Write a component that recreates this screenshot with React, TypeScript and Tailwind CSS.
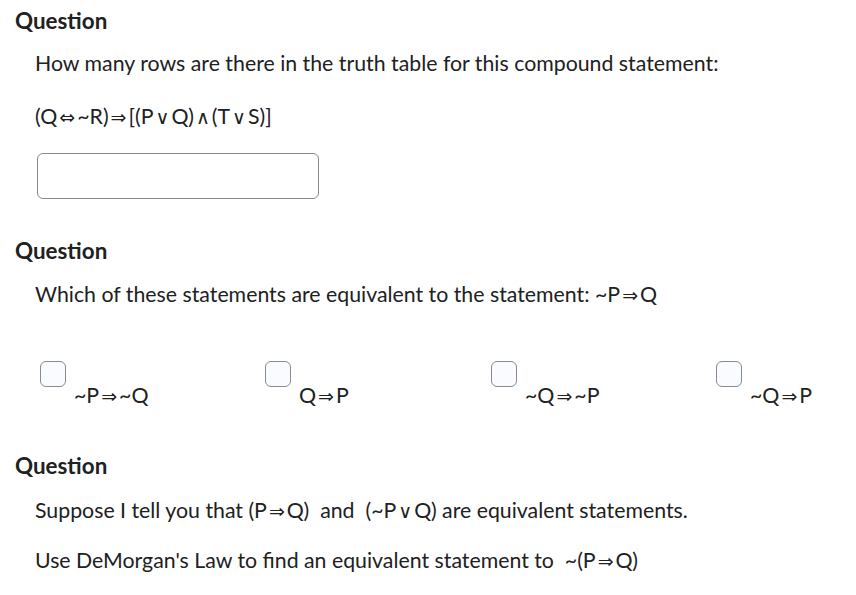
import React from 'react';

const options = ['~P⇒~Q', 'Q⇒P', '~Q⇒~P', '~Q⇒P'];

// logic symbols fall back to a thinner symbol face in the original
const Sym: React.FC<{ children: React.ReactNode }> = ({ children }) => (
  <span className="font-['DejaVu_Sans',sans-serif] text-[19px] mx-[2px]">{children}</span>
);

const Heading: React.FC<{ children: React.ReactNode }> = ({ children }) => (
  <h2 className="pl-[15px] text-[22.4px] font-bold leading-[24px] text-[#202122]">{children}</h2>
);

function withSymbols(s: string) {
  return s.split(/([⇔⇒∨∧])/).map((part, i) =>
    /[⇔⇒∨∧]/.test(part) ? <Sym key={i}>{part}</Sym> : <React.Fragment key={i}>{part}</React.Fragment>
  );
}

export default function App() {
  return (
    <div className="w-[856px] h-[595px] bg-white overflow-hidden text-[#202122] font-['Lato','Liberation_Sans',sans-serif]">
      <div className="pt-[9px]">
        <Heading>Question</Heading>
        <p className="pl-[35px] pt-[18px] text-[21.3px] leading-[24px]">
          How many rows are there in the truth table for this compound statement:
        </p>
        <p className="pl-[35px] pt-[29px] text-[21.3px] leading-[24px]">{withSymbols('(Q⇔~R)⇒[(P∨Q)∧(T∨S)]')}</p>
        <div className="ml-[37px] mt-[24px] w-[282px] h-[46px] rounded-[6px] border border-[#868c8f] bg-white" />
      </div>

      <div className="pt-[40px]">
        <Heading>Question</Heading>
        <p className="pl-[35px] pt-[19px] text-[21.3px] leading-[24px]">
          Which of these statements are equivalent to the statement: {withSymbols('~P⇒Q')}
        </p>
        <div className="pl-[40px] pt-[54px] grid grid-cols-[225px_226px_225px_140px]">
          {options.map((o) => (
            <div key={o} className="flex items-start">
              <div className="w-[26px] h-[26px] rounded-[6px] border border-[#868c8f] bg-[#f9fbff] shrink-0" />
              <span className="ml-[8px] mt-[22px] text-[21.3px] leading-[24px]">{withSymbols(o)}</span>
            </div>
          ))}
        </div>
      </div>

      <div className="pt-[46px]">
        <Heading>Question</Heading>
        <p className="pl-[35px] pt-[20px] text-[21.3px] leading-[24px] whitespace-pre">
          {withSymbols('Suppose I tell you that (P⇒Q)  and  (~P∨Q) are equivalent statements.')}
        </p>
        <p className="pl-[35px] pt-[25px] text-[21.3px] leading-[24px] whitespace-pre">
          {withSymbols("Use DeMorgan's Law to find an equivalent statement to  ~(P⇒Q)")}
        </p>
      </div>
    </div>
  );
}
